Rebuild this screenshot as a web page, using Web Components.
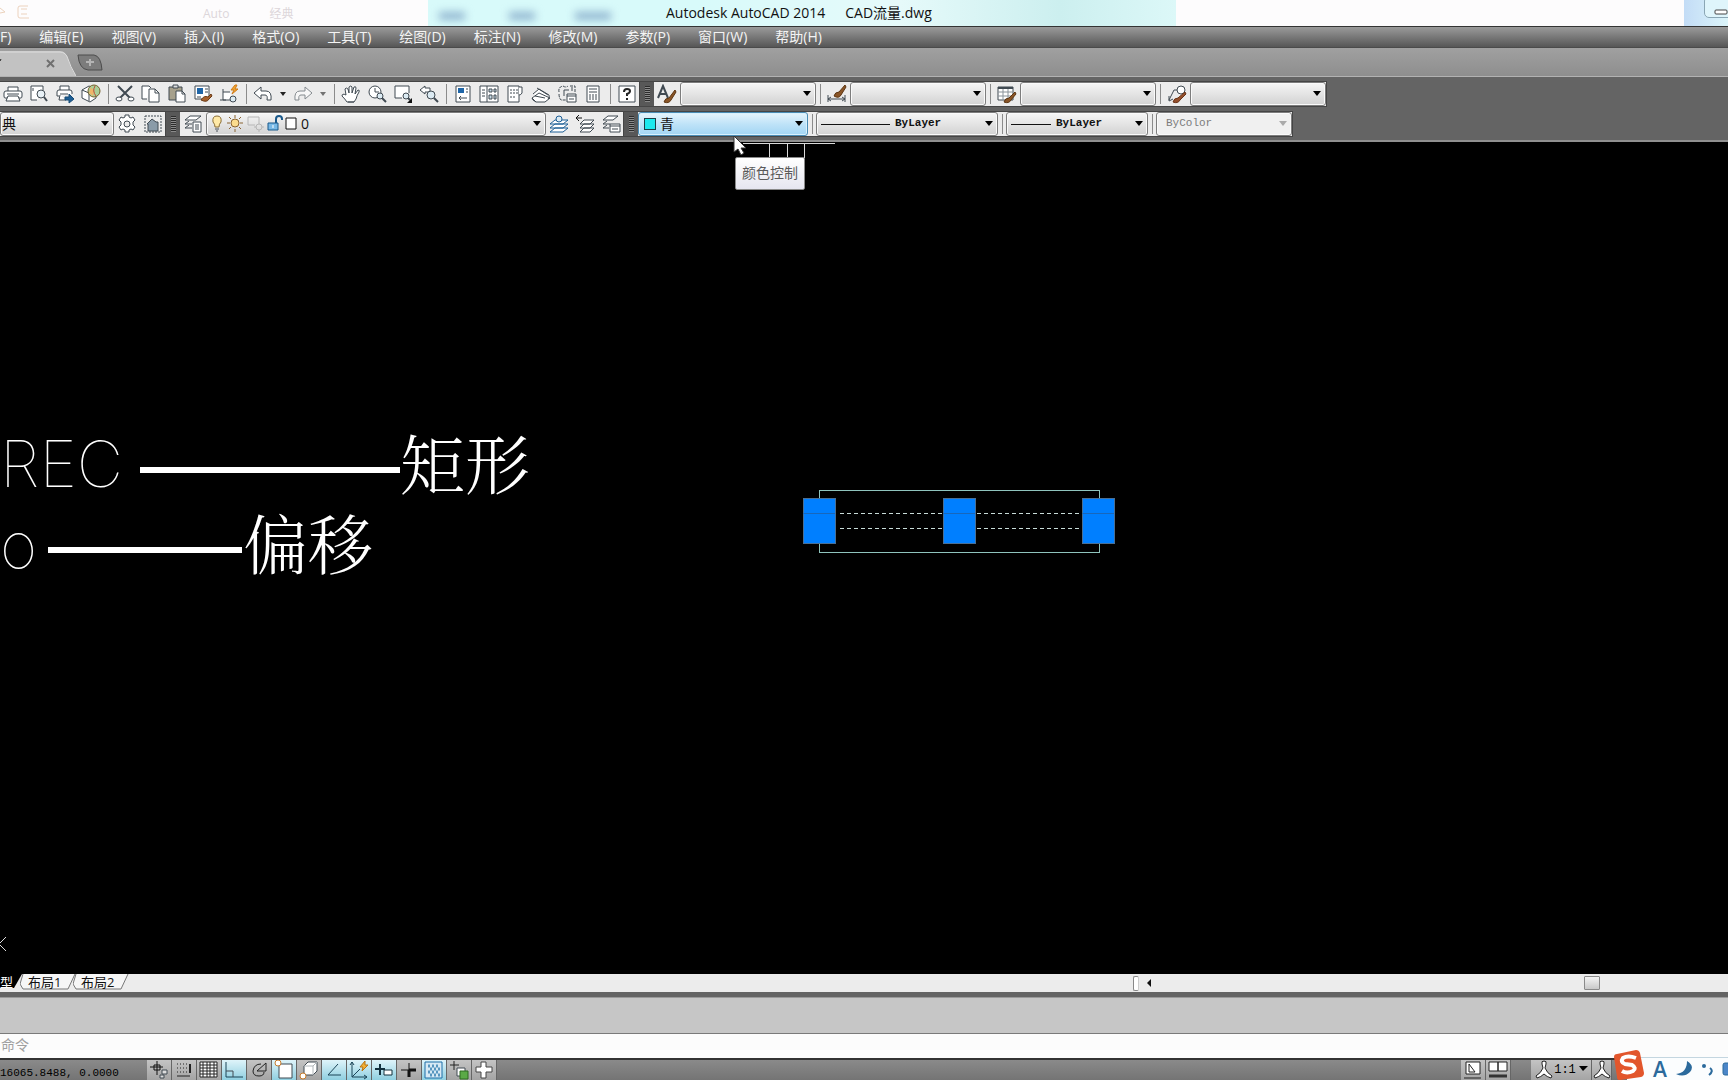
<!DOCTYPE html>
<html lang="zh-CN">
<head>
<meta charset="utf-8">
<title>Autodesk AutoCAD 2014 CAD流量.dwg</title>
<style>
  html, body { margin: 0; height: 100%; }
  body {
    overflow: hidden;
    background: #646464;
    font: 14px/20px "Open Sans", "Noto Sans CJK SC", sans-serif;
    color: #111;
  }
</style>
</head>
<body>
<cad-app>
  <title-bar slot="top" workspace="经典">
    <span slot="app">Autodesk AutoCAD 2014</span>
    <span slot="file">CAD流量.dwg</span>
  </title-bar>
  <menu-bar slot="top">
    <button>F)</button>
    <button>编辑(E)</button>
    <button>视图(V)</button>
    <button>插入(I)</button>
    <button>格式(O)</button>
    <button>工具(T)</button>
    <button>绘图(D)</button>
    <button>标注(N)</button>
    <button>修改(M)</button>
    <button>参数(P)</button>
    <button>窗口(W)</button>
    <button>帮助(H)</button>
  </menu-bar>
  <file-tabs slot="top"></file-tabs>

  <tool-row slot="top">
    <tool-bar>
      <tool-button icon="print" label="打印"></tool-button>
      <tool-button icon="preview" label="打印预览"></tool-button>
      <tool-button icon="publish" label="发布"></tool-button>
      <tool-button icon="print3d" label="三维打印"></tool-button>
      <tool-sep></tool-sep>
      <tool-button icon="cut" label="剪切"></tool-button>
      <tool-button icon="copy" label="复制"></tool-button>
      <tool-button icon="paste" label="粘贴"></tool-button>
      <tool-button icon="match" label="特性匹配"></tool-button>
      <tool-button icon="block" label="块编辑器"></tool-button>
      <tool-sep></tool-sep>
      <tool-button icon="undo" label="放弃"></tool-button>
      <tool-button icon="caret" label="放弃列表" narrow></tool-button>
      <tool-button icon="redo" label="重做" dim></tool-button>
      <tool-button icon="caret" label="重做列表" narrow dim></tool-button>
      <tool-sep></tool-sep>
      <tool-button icon="pan" label="实时平移"></tool-button>
      <tool-button icon="zoom" label="实时缩放"></tool-button>
      <tool-button icon="zoomwin" label="窗口缩放"></tool-button>
      <tool-button icon="zoomprev" label="缩放上一个"></tool-button>
      <tool-sep></tool-sep>
      <tool-button icon="props" label="特性"></tool-button>
      <tool-button icon="center" label="设计中心"></tool-button>
      <tool-button icon="palette" label="工具选项板"></tool-button>
      <tool-button icon="sheets" label="图纸集管理器"></tool-button>
      <tool-button icon="markup" label="标记集管理器"></tool-button>
      <tool-button icon="calc" label="快速计算器"></tool-button>
      <tool-sep></tool-sep>
      <tool-button icon="help" label="帮助"></tool-button>
    </tool-bar>
    <tool-bar grip>
      <tool-button icon="textstyle" label="文字样式"></tool-button>
      <combo-box class="style" label="文字样式控制"></combo-box>
      <tool-sep></tool-sep>
      <tool-button icon="dimstyle" label="标注样式"></tool-button>
      <combo-box class="style" label="标注样式控制"></combo-box>
      <tool-sep></tool-sep>
      <tool-button icon="tablestyle" label="表格样式"></tool-button>
      <combo-box class="style" label="表格样式控制"></combo-box>
      <tool-sep></tool-sep>
      <tool-button icon="leaderstyle" label="多重引线样式"></tool-button>
      <combo-box class="style" label="多重引线样式控制"></combo-box>
    </tool-bar>
  </tool-row>

  <tool-row slot="top">
    <tool-bar>
      <combo-box class="workspace" value="典" label="工作空间"></combo-box>
      <tool-button icon="gear" label="工作空间设置"></tool-button>
      <tool-button icon="home" label="我的工作空间"></tool-button>
    </tool-bar>
    <tool-bar grip>
      <tool-button icon="layerprops" label="图层特性管理器"></tool-button>
      <combo-box class="layer" value="0" label="图层控制"><layer-state></layer-state></combo-box>
      <tool-button icon="layercur" label="置为当前图层"></tool-button>
      <tool-button icon="layerprev" label="上一个图层"></tool-button>
      <tool-button icon="layerstate" label="图层状态管理器"></tool-button>
    </tool-bar>
    <tool-bar grip>
      <combo-box class="color" value="青" label="颜色控制" active><color-chip></color-chip></combo-box>
      <tool-sep></tool-sep>
      <combo-box class="linetype" value="ByLayer" label="线型控制" mono><line-sample class="long"></line-sample></combo-box>
      <tool-sep></tool-sep>
      <combo-box class="weight" value="ByLayer" label="线宽控制" mono><line-sample></line-sample></combo-box>
      <tool-sep></tool-sep>
      <combo-box class="plot" value="ByColor" label="打印样式控制" mono disabled></combo-box>
    </tool-bar>
  </tool-row>

  <drawing-area></drawing-area>
  <layout-tabs slot="bottom"></layout-tabs>
  <command-line slot="bottom" prompt="命令"></command-line>
  <status-bar slot="bottom" coords="16065.8488, 0.0000"></status-bar>
  <tool-tip slot="over">颜色控制</tool-tip>
  <ime-bar slot="over"></ime-bar>
</cad-app>

<script>
// Icons share a 20x20 grid. Default stroke comes from the svg element.
const ICONS = {
  print: `<path fill="#fff" d="M5 7V3h10v4M4 14H2Q1 14 1 12V9q0-2 2-2h14q2 0 2 2v3q0 2-1 2h-2"/><path fill="#fff" d="M5 12h10l2 5H3z"/><path d="M4 10h12"/>`,
  preview: `<path fill="#fff" d="M14 6V2H2v14h6"/><path d="M4 4v3"/><circle cx="12" cy="10" r="4" fill="#e8f1f6"/><path stroke-width="2" d="M15 13l3 4"/>`,
  publish: `<path fill="#fff" d="M5 6V2h9v4M4 12H2V8q0-2 2-2h11q2 0 2 2v2M5 10h8M5 11l-1 5h7"/><path fill="#1d5e95" stroke="#174a75" d="M10 13h4v-3l5 5-5 4v-3h-4z"/>`,
  print3d: `<path fill="#fff" d="M1 6l7-4 7 3v9l-6 4-8-4z"/><path d="M1 6l7 3v8"/><circle cx="13" cy="7" r="6" fill="#a9d09a" stroke="#77602c"/><path fill="#f0b569" stroke="none" d="M10 3q4 4 2 9l-4-3z"/><path stroke="#c54a31" d="M14 2q-3 5 1 10"/>`,
  cut: `<path stroke-width="2" d="M3 2l12 12M17 2L5 14"/><ellipse cx="4" cy="15" rx="3" ry="2" fill="#fff"/><ellipse cx="16" cy="15" rx="3" ry="2" fill="#fff"/>`,
  copy: `<path fill="#fff" d="M6 15H1V2h7l2 2"/><path fill="#fff" d="M8 5h6l4 4v9H8z"/><path d="M14 5v4h4"/>`,
  paste: `<path fill="#a7a18c" d="M2 3h13v13H2z"/><path fill="#ddd" d="M6 1h5v3H6z"/><path fill="#fff" d="M9 7h6l3 3v8H9z"/><path d="M15 7v3h3"/>`,
  match: `<path fill="#fff" d="M2 2h14v13H2z"/><path fill="#1f66a8" stroke="none" d="M4 4h6v6H4z"/><path d="M12 5h3M12 8h3M4 13h4"/><path fill="#a4602d" stroke="#6b3b16" d="M8 16q3-5 7-3l3-3 1 2-3 3q-2 4-8 1z"/>`,
  block: `<path fill="#fff" d="M11 8H4v8h9"/><path d="M1 16h6M4 5v3"/><circle cx="14" cy="15" r="3" fill="#dcebf3"/><path fill="#f2a530" stroke="#cd7a18" d="M16 1l-4 5h3l-2 4 6-5h-3l2-4z"/>`,
  undo: `<path fill="#fff" d="M1 9l7-6v4h5q6 0 5 9h-4q1-5-2-5H8v4z"/>`,
  redo: `<path fill="#fff" d="M19 9l-7-6v4H7q-6 0-5 9h4q-1-5 2-5h4v4z"/>`,
  caret: `<path fill="currentColor" stroke="none" d="M7 8h6l-3 4z"/>`,
  pan: `<path fill="#fff" d="M6 18q-2-3-5-6 0-3 4-1L4 5q1-2 3 0l1 4V3q2-2 3 0v6l2-6q2-1 2 1l-1 6 3-4q2 0 1 2-2 3-3 7l-2 3z"/><path d="M7 18h6"/>`,
  zoom: `<circle cx="8" cy="8" r="6" fill="#fff"/><path d="M8 4v4h4"/><circle cx="13" cy="12" r="3" fill="#dcebf3"/><path stroke-width="2" d="M15 14l4 4"/>`,
  zoomwin: `<path fill="#fff" d="M9 14H2V2h14v7"/><circle cx="13" cy="12" r="3" fill="#dcebf3"/><path stroke-width="2" d="M15 14l2 2"/><path fill="#111" stroke="none" d="M19 14v5h-5z"/>`,
  zoomprev: `<path fill="#fff" d="M1 6l5-4v2h5v4H6v2z"/><circle cx="12" cy="11" r="4" fill="#dcebf3"/><path stroke-width="2" d="M15 14l4 4"/>`,
  props: `<path fill="#fff" d="M3 2h14v16H3z"/><path fill="#1f66a8" stroke="none" d="M5 4h6v5H5z"/><path d="M13 5h2M13 8h2M6 14h8M8 12l-2 2 2 2"/>`,
  center: `<path fill="#fff" d="M1 2h18v16H1z"/><path d="M8 2v16M3 6h3M3 9h3M3 12h3"/><path fill="#c6dae6" d="M10 5h3v3h-3zM15 5h2v3h-2zM10 11h3v4h-3zM15 11h2v4h-2z"/>`,
  palette: `<path fill="#fff" d="M3 2h11v16H3z"/><path fill="#fff" d="M14 3h3v6q-1 2-3 2"/><path d="M5 6h2M8 6h2M11 6h2M5 9h2M8 9h2M11 9h2M5 13h2M8 13h2"/>`,
  sheets: `<path fill="#fff" d="M1 14l7-5 11 5-5 4H5zM2 10l6-5 10 6q1 3-1 4"/><path d="M6 4l11 7M4 12l10 2M1 14q0 2 4 4"/>`,
  markup: `<path stroke-dasharray="3 1" d="M2 8q-1-5 4-6 3 2 5 0M2 10q0 4 2 6h5M13 2h5v6"/><path d="M7 6v6M7 6h5M15 3v4"/><path fill="#fff" d="M10 10h9v8h-9z"/><path d="M10 12h9M12 15h5"/>`,
  calc: `<path fill="#fff" d="M4 2h12v16H4z"/><path d="M6 5h8M6 8h8"/><path stroke-dasharray="2 1" d="M6 11h8M6 13h8M6 15h8"/>`,
  help: `<path fill="#fff" d="M2 2h16v16H2z"/><path stroke="#222" stroke-width="2" d="M7 8q0-3 3-3t3 2q0 2-3 3v2M10 14v2"/>`,
  textstyle: `<path stroke-width="2" d="M1 14L6 2l5 12M3 10h6"/><path fill="#8a5527" stroke="#5c3613" d="M7 18q1-4 5-4l6-8 1 2-5 8q-2 4-7 2z"/>`,
  dimstyle: `<path d="M1 11v7M18 11v7M1 15h17M4 13l-3 2 3 2M15 13l3 2-3 2"/><path fill="#8a5527" stroke="#5c3613" d="M7 12q1-4 5-4l6-7 1 2-5 8q-2 4-7 1z"/>`,
  tablestyle: `<path fill="#fff" d="M1 3h15v13H1z"/><path stroke-width="2" d="M1 4h15"/><path stroke="#8a939a" d="M1 8h15M1 12h15M6 5v11M11 5v11"/><path fill="#8a5527" stroke="#5c3613" d="M7 18q1-4 5-4l6-6 1 2-5 6q-2 4-7 2z"/>`,
  leaderstyle: `<path d="M2 16L7 6h4M2 12v5l4-2"/><circle cx="14" cy="6" r="4" fill="#fff"/><path fill="#95502b" stroke="#6a3217" d="M6 18q1-4 5-4l7-6 1 2-6 6q-2 4-7 2z"/>`,
  gear: `<path fill="#fff" d="M8 1h4v2l2 1 2-1 2 3-2 2v3l2 2-2 3-2-1-2 1v2H8v-2l-2-1-2 1-2-3 2-2V8L2 6l2-3 2 1 2-1z"/><circle cx="10" cy="10" r="3" fill="#ececec"/>`,
  home: `<path stroke-dasharray="2 1" d="M2 2h16v16H2z"/><path fill="#8a9ba8" d="M4 10l5-5 4 3h2v9H5v-7z"/>`,
  layerprops: `<path fill="#fff" d="M2 6l5-4h11l-5 4zM2 10l4-3M2 10h7M2 14l4-3M2 14h7"/><path fill="#fff" d="M10 8h8v10h-8z"/><path d="M12 11h4M12 13h4M12 15h4"/>`,
  layercur: `<g stroke="#1d5e95"><path fill="#fff" d="M1 18l5-4h13l-5 4zM1 14l5-4h13l-5 4zM1 10l5-4h13l-5 4z"/></g><circle cx="10" cy="5" r="3" fill="#dcebf3" stroke="#1d5e95"/>`,
  layerprev: `<path fill="#fff" d="M5 18l4-4h10l-4 4zM5 14l4-4h10l-4 4zM5 10l4-4h10l-4 4z"/><path stroke="#111" d="M1 4h6M4 1L1 4l3 3"/>`,
  layerstate: `<path fill="#fff" d="M2 6l5-4h10l-5 4zM2 10l4-3M2 10h7M2 14l4-3M2 14h6"/><path fill="#fff" d="M9 10h10v8H9z"/><path d="M9 12h10M11 15h6"/>`,
  infer: `<path stroke="#111" d="M8 1v14M1 7h13M5 5h6v5H5z"/><path fill="#ddd" d="M13 10h5v4h-5zM11 15h4v3h-4z"/>`,
  snap: `<path stroke="#222" stroke-dasharray="1 2" d="M3 4h11M3 8h11M3 12h11"/><path stroke="#222" d="M3 16h13"/><path stroke="#222" stroke-width="2" d="M16 4v9"/>`,
  grid: `<path fill="#fff" stroke="#222" d="M1 2h17v15H1zM4 2v15M8 2v15M11 2v15M15 2v15M1 5h17M1 8h17M1 11h17M1 14h17"/>`,
  ortho: `<path stroke="#1b4457" d="M2 2v15h17"/><path d="M2 11h7v6"/>`,
  polar: `<path stroke="#222" d="M17 3v8H8zM12 4Q5 4 4 11q0 5 6 5 5 0 5-4"/>`,
  osnap: `<path fill="#fff" d="M5 4h13v14H5z"/><circle cx="4" cy="3" r="3" fill="#fff" stroke="#c77b2c"/>`,
  osnap3d: `<path fill="#fff" d="M5 6l4-4h9v9l-4 4H5z"/><path stroke="#b0b6ba" d="M5 6h9v9M14 6l4-4"/><circle cx="4" cy="16" r="3" fill="#fff" stroke="#c77b2c"/>`,
  otrack: `<path stroke="#1b4457" d="M14 4L4 15h13"/>`,
  ducs: `<path stroke="#1b4457" d="M3 2v15h15M1 5l2-3 2 3M15 15l3 2-3 2M3 17l8-8"/><path fill="#f2b035" stroke="#b87415" d="M16 1l-5 6h3l-1 4 6-6h-3z"/>`,
  dyn: `<path stroke="#12303d" stroke-width="2" d="M1 9h10M6 4v11"/><path fill="#fff" stroke="#12303d" d="M10 10h8v5h-8z"/>`,
  lwt: `<path stroke="#111" d="M2 10h8V3"/><path stroke="#111" stroke-width="3" d="M10 10h7M10 10v7"/>`,
  transp: `<path fill="#d6e9f4" stroke="#1d6ea8" d="M1 2h17v16H1z"/><path stroke="#5796bf" stroke-width="3" stroke-dasharray="2 2" d="M4 6h12M6 9h10M4 12h12M6 15h10"/>`,
  quick: `<path stroke="#222" d="M5 1v9M1 5h9"/><path fill="#fff" d="M8 8h8v8H8z"/><path fill="#5aa946" stroke="#2c6b20" d="M11 11h8v8h-8z"/>`,
  plus: `<path fill="#fff" stroke="#444" d="M7 2h5v5h6v5h-6v6H7v-6H2V7h5z"/>`,
  model: `<path fill="#fff" stroke="#222" d="M3 2h14v12H3z"/><path stroke="#222" d="M6 4v8h6zM1 18h17"/>`,
  tiles: `<path fill="#fff" stroke="#222" d="M1 2h9v9H1zM10 2h9v9h-9z"/><path stroke="#333" stroke-width="3" d="M1 16h18"/>`,
  scale: `<path fill="#fff" stroke="#222" d="M10 1q3 0 2 3l-1 4q2 5 7 8l-1 2q-4-1-7-4-3 3-7 4l-1-2q5-3 7-8L8 4q-1-3 2-3z"/>`
};

function drawIcon(name) {
  return `<svg width="20" height="20" viewBox="0 0 20 20" aria-hidden="true"
    fill="none" stroke="#404a52" stroke-width="1">${ICONS[name]}</svg>`;
}

class CadElement extends HTMLElement {
  constructor() {
    super();
    this.attachShadow({ mode: 'open' });
  }

  connectedCallback() {
    this.shadowRoot.innerHTML = this.template();
  }
}

class CadApp extends CadElement {
  template() {
    return `
      <style>
        :host { display: flex; flex-direction: column; height: 100vh; position: relative; overflow: hidden; }
        header, footer { flex: none; }
        header { box-shadow: inset 0 -2px #909090; }
        main { flex: 1; min-height: 0; display: flex; }
      </style>
      <header><slot name="top"></slot></header>
      <main><slot></slot></main>
      <footer><slot name="bottom"></slot></footer>
      <slot name="over"></slot>
    `;
  }
}

class TitleBar extends CadElement {
  template() {
    return `
      <style>
        :host {
          display: block; height: 27px; box-sizing: border-box; position: relative;
          background: linear-gradient(90deg, #fdfcfd 0 428px, #d8fafa 428px 700px, #e6fafa 900px, #ccefef 1060px, #dcf8f8 1176px, #fdfcfd 1176px);
          border-bottom: 1px solid #333;
        }
        h1 {
          margin: 0; font-size: 14px; line-height: 25px; font-weight: 400;
          display: flex; gap: 20px; padding-left: 666px; white-space: nowrap;
        }
        .ghost { position: absolute; top: 4px; left: 203px; color: #dcd6da; font-size: 12px; display: flex; gap: 40px; }
        .blob { position: absolute; top: 12px; height: 8px; width: 26px; background: #8fb4cf; filter: blur(4px); }
        .b1 { left: 439px; } .b2 { left: 509px; } .b3 { left: 575px; width: 36px; }
        .doc { position: absolute; left: 0; top: 3px; }
        .glass { position: absolute; right: 0; top: 0; width: 44px; height: 26px; background: linear-gradient(90deg, #c3dcf6, #dcf5fa); }
        button {
          position: absolute; right: -12px; top: -4px; width: 36px; height: 22px; padding: 0;
          border: 1px solid #8aa6b4; border-radius: 5px; background: #dff5fb;
        }
        button svg { position: absolute; left: 9px; top: 12px; }
      </style>
      <h1><slot name="app"></slot><slot name="file"></slot></h1>
      <div class="ghost"><span>Auto</span><span>${this.getAttribute('workspace')}</span></div>
      <i class="blob b1"></i><i class="blob b2"></i><i class="blob b3"></i>
      <svg class="doc" width="34" height="18" fill="none" stroke="#ecd2bd"><path d="M0 5l5 4-5 1M28 3h-8q-2 0-2 2v8q0 2 2 2h9M21 6h6M21 11h6"/></svg>
      <div class="glass"></div>
      <button aria-label="最小化"><svg width="15" height="6"><rect x="1" y="1" width="12" height="4" rx="1" fill="#fff" stroke="#444"/></svg></button>
    `;
  }
}

class MenuBar extends CadElement {
  template() {
    return `
      <style>
        :host { display: block; background: linear-gradient(#9a9a9a, #565656); height: 21px; border-bottom: 1px solid #4a4a4a; box-sizing: border-box; }
        nav { display: flex; gap: 28px; }
        ::slotted(button) {
          border: 0; padding: 0; background: none; color: #f4f4f4;
          font: inherit; font-size: 14px; line-height: 20px; white-space: nowrap;
        }
      </style>
      <nav><slot></slot></nav>
    `;
  }
}

class FileTabs extends CadElement {
  template() {
    return `
      <style>
        :host { display: flex; height: 28px; align-items: flex-end; margin-bottom: 5px; background: linear-gradient(#a0a0a0, #8e8e8e); border-bottom: 1px solid #b2b2b2; }
        .tab { position: relative; width: 76px; height: 25px; }
        .tab svg { display: block; }
        button { border: 0; padding: 0; background: none; }
        .close { position: absolute; left: 45px; top: 7px; width: 12px; height: 12px; }
        .new { height: 25px; }
      </style>
      <div class="tab">
        <svg width="76" height="25"><path d="M0 0H60Q66 0 68 8T76 25H0z" fill="#c2c2c2"/><path d="M0 1H60Q66 1 68 8T76 25" fill="none" stroke="#dedede"/><path d="M1 8l-1 2" stroke="#222"/></svg>
        <button class="close" aria-label="关闭"><svg width="12" height="12" stroke="#707070" stroke-width="2"><path d="M2 2l7 7M9 2l-7 7"/></svg></button>
      </div>
      <button class="new" aria-label="新建"><svg width="28" height="25"><path d="M2 4h16q7 1 8 15H12Q3 18 2 4z" fill="#7c7c7c" stroke="#4c4c4c"/><path d="M14 8v7M10 11h8" stroke="#b4b4b4" stroke-width="2"/></svg></button>
    `;
  }
}

class ToolRow extends CadElement {
  template() {
    return `
      <style>
        :host { display: flex; height: 24px; margin-bottom: 6px; }
      </style>
      <slot></slot>
    `;
  }
}

class ToolBar extends CadElement {
  template() {
    const grip = this.hasAttribute('grip') ? '<i></i>' : '';
    return `
      <style>
        :host { display: flex; flex: none; height: 24px; background: #ececec; box-shadow: 0 0 0 1px #454545; }
        i { width: 14px; background: #585858; display: flex; align-items: center; justify-content: center; }
        i::before { content: ""; width: 5px; height: 16px; background: repeating-linear-gradient(#2c2c2c 0 1px, #8a8a8a 1px 2px); }
        ::slotted(combo-box.style) { width: 136px; }
        ::slotted(combo-box.workspace) { width: 114px; }
        ::slotted(combo-box.layer) { width: 340px; }
        ::slotted(combo-box.color) { width: 170px; }
        ::slotted(combo-box.linetype) { width: 182px; }
        ::slotted(combo-box.weight) { width: 142px; }
        ::slotted(combo-box.plot) { width: 136px; }
      </style>
      ${grip}<slot></slot>
    `;
  }
}

class ToolSep extends CadElement {
  template() {
    return `
      <style>
        :host { display: flex; width: 8px; justify-content: center; align-items: center; }
        i { width: 1px; height: 20px; background: #8b8b8b; }
      </style>
      <i></i>
    `;
  }
}

class ToolButton extends CadElement {
  template() {
    const dim = this.hasAttribute('dim');
    return `
      <style>
        :host { display: block; width: ${this.hasAttribute('narrow') ? 14 : 26}px; flex: none; overflow: hidden; }
        button {
          width: 100%; height: 24px; padding: 0; border: 0; background: none; color: #222;
          display: flex; align-items: center; justify-content: center;
          opacity: ${dim ? 0.6 : 1};
        }
        svg { flex: none; }
      </style>
      <button aria-label="${this.getAttribute('label')}">${drawIcon(this.getAttribute('icon'))}</button>
    `;
  }
}

class ComboBox extends CadElement {
  template() {
    const value = this.getAttribute('value') || '';
    const active = this.hasAttribute('active');
    const disabled = this.hasAttribute('disabled');
    const mono = this.hasAttribute('mono');
    let fill = 'linear-gradient(#f6f6f6, #d2d2d2)';
    if (active) fill = 'linear-gradient(#e6f5fd, #bfe3f8 50%, #a2d5f3)';
    if (disabled) fill = '#f0f0f0';
    return `
      <style>
        :host {
          display: flex; align-items: center; box-sizing: border-box; height: 24px;
          border: 1px solid ${active ? '#4a8cb5' : '#7d7d7d'}; border-radius: 3px;
          background: ${fill}; box-shadow: inset 0 0 0 1px ${active ? '#d8f1fd' : '#fafafa'};
          position: relative;
        }
        select {
          appearance: none; flex: 1; min-width: 0; height: 22px; border: 0; padding: 0 18px 2px 4px;
          background: none; color: ${disabled ? '#7c7c7c' : '#111'}; opacity: 1;
          font-family: ${mono ? '"Liberation Mono", monospace' : '"Open Sans", "Noto Sans CJK SC", sans-serif'};
          font-size: ${mono ? 11 : 14}px;
          font-weight: ${mono && !disabled ? 700 : 400};
        }
        :host(.workspace) select { padding-left: 1px; }
        :host(.plot) select { padding-left: 9px; }
        svg { position: absolute; right: 3px; top: 8px; pointer-events: none; }
      </style>
      <slot></slot>
      <select aria-label="${this.getAttribute('label')}" ${disabled ? 'disabled' : ''}><option>${value}</option></select>
      <svg width="10" height="6"><path d="M1 0h8L5 5z" fill="${disabled ? '#aaa' : '#000'}"/></svg>
    `;
  }
}

class LayerState extends CadElement {
  template() {
    return `
      <style>:host { display: block; height: 20px; padding-left: 2px; }</style>
      <svg width="88" height="20" fill="none" stroke="#4a525a">
        <path d="M6 13q0-3-2-5-1-6 4-6t4 6q-2 2-2 5z" fill="#ffe9a6" stroke="#8a6d35"/><path d="M6 15h4M7 17h2"/>
        <circle cx="26" cy="9" r="4" fill="#fbdc8d" stroke="#8a6432"/>
        <path stroke="#8a6432" d="M26 1v3M26 15v3M18 9h3M31 9h3M20 3l2 2M30 13l2 2M32 3l-2 2M22 13l-2 2"/>
        <g stroke="#b6b6b6"><path d="M46 11h-7V3h11v5"/><circle cx="50" cy="13" r="3"/><path d="M50 8v2M50 16v2M45 13h2M53 13h2"/></g>
        <path d="M59 9h10v7H59z" fill="#79b9e6" stroke="#19588a"/><path d="M67 9V5q0-3 3-3t3 3v1" stroke="#19588a" stroke-width="2"/><path d="M64 11v3" stroke="#fff"/>
        <path d="M77 4h10v11H77z" fill="#fff" stroke="#111"/>
      </svg>
    `;
  }
}

class ColorChip extends CadElement {
  template() {
    return `
      <style>:host { display: block; width: 10px; height: 10px; margin-left: 5px; border: 1px solid #1b4048; background: #1ee9ee; }</style>
    `;
  }
}

class LineSample extends CadElement {
  template() {
    return `
      <style>
        :host { display: block; width: 40px; height: 1px; margin: 0 1px 0 4px; background: #111; }
        :host(.long) { width: 69px; }
      </style>
    `;
  }
}

class DrawingArea extends CadElement {
  template() {
    const grip = (x) => `<rect x="${x}" y="356" width="32" height="45" fill="#007fff" stroke="#4a6f94"/><path d="M${x} 371h32" stroke="#1867bb"/>`;
    return `
      <style>
        :host { display: block; flex: 1; position: relative; background: #000; overflow: hidden; color: #fff; }
        svg { position: absolute; width: 100%; height: 100%; }
        span { position: absolute; white-space: nowrap; line-height: 80px; }
        .stroke { font-family: Inter, sans-serif; font-weight: 100; font-size: 64px; left: 0; }
        .song { font-family: "Noto Serif CJK SC", "Noto Sans CJK SC", serif; font-weight: 300; font-size: 65px; }
        .rec { top: 282px; }
        .o { top: 363px; }
        .rect { left: 400px; top: 279px; }
        .offset { left: 243px; top: 359px; }
      </style>
      <svg fill="none" shape-rendering="crispEdges">
        <path d="M743 1H835M769 1V16M787 1V16M804 1V16" stroke="#d8d8d8"/>
        <path d="M140 328H400M48 408H242" stroke="#fff" stroke-width="6"/>
        <path d="M819 348H1099V410H819z" stroke="#8fc4bd"/>
        <path d="M840 371H943M977 371H1082M840 386H943M977 386H1082" stroke="#c8dcd8" stroke-dasharray="4 3"/>
        ${grip(803)}${grip(943)}${grip(1082)}
        <path d="M-8 795L6 809M6 795L-8 809" stroke="#ddd" shape-rendering="auto"/>
      </svg>
      <span class="stroke rec">REC</span>
      <span class="song rect">矩形</span>
      <span class="stroke o">o</span>
      <span class="song offset">偏移</span>
    `;
  }
}

class LayoutTabs extends CadElement {
  template() {
    return `
      <style>
        :host { display: flex; height: 18px; background: #ececec; border-bottom: 5px solid #646464; font-size: 13px; line-height: 17px; }
        nav { display: flex; flex: 1133; min-width: 0; }
        button { position: relative; border: 0; padding: 0; background: none; font: inherit; color: #111; height: 17px; white-space: nowrap; }
        button span { position: relative; }
        button svg { position: absolute; left: 0; top: 0; }
        .model { width: 20px; color: #fff; text-align: left; }
        .layout { width: 53px; text-align: left; padding-left: 8px; }
        .scroll { flex: 595; display: flex; align-items: center; position: relative; }
        .split { width: 4px; height: 13px; border: 1px solid #888; border-right-color: #ccc; background: #fff; border-radius: 2px; }
        .track { flex: 1; display: flex; align-items: center; padding: 0 128px 0 7px; justify-content: space-between; }
        .track button { display: flex; align-items: center; }
        .track svg { position: static; }
        .thumb { width: 14px; height: 12px; border: 1px solid #8a8a8a; border-radius: 1px; background: linear-gradient(#f4f4f4, #c9c9c9); }
      </style>
      <nav>
        <button class="model"><svg width="22" height="17"><path d="M0 0H22L14 14H0z" fill="#000"/></svg><span>型</span></button>
        <button class="layout"><svg width="56" height="17" fill="#f6f6f6" stroke="#777"><path d="M3 0L0 10l3 5H48L55 0"/></svg><span>布局1</span></button>
        <button class="layout"><svg width="56" height="17" fill="#f6f6f6" stroke="#777"><path d="M3 0L0 10l3 5H48L55 0"/></svg><span>布局2</span></button>
      </nav>
      <div class="scroll">
        <div class="split"></div>
        <div class="track">
          <button aria-label="向左滚动"><svg width="6" height="8"><path d="M5 0v8L1 4z" fill="#111"/></svg></button>
          <div class="thumb"></div>
        </div>
      </div>
    `;
  }
}

class CommandLine extends CadElement {
  template() {
    return `
      <style>
        :host { display: block; }
        output { display: block; height: 35px; background: #c6c6c6; border-top: 1px solid #9a9a9a; border-bottom: 1px solid #7a7a7a; }
        input {
          display: block; width: 100%; height: 24px; box-sizing: border-box; border: 0; margin: 0; padding: 0 0 4px 1px;
          background: #fcfcfc; font: inherit; font-size: 14px; color: #111;
        }
        input::placeholder { color: #a0a0a0; opacity: 1; }
      </style>
      <output></output>
      <input placeholder="${this.getAttribute('prompt')}" aria-label="${this.getAttribute('prompt')}">
    `;
  }
}

class StatusBar extends CadElement {
  template() {
    const toggles = ['infer', 'snap', 'grid', 'ortho', 'polar', 'osnap', 'osnap3d', 'otrack', 'ducs', 'dyn', 'lwt', 'transp', 'quick', 'plus'];
    const on = ['ortho', 'osnap', 'otrack', 'ducs', 'dyn', 'transp'];
    const buttons = toggles.map(name =>
      `<button aria-label="${name}" aria-pressed="${on.includes(name)}">${drawIcon(name)}</button>`).join('');
    return `
      <style>
        :host { display: flex; height: 20px; overflow: hidden; border-top: 2px solid #333; background: linear-gradient(#8a8a8a, #747474); }
        .coords { flex: none; width: 147px; font: 11px/26px "Liberation Mono", monospace; color: #000; white-space: nowrap; }
        div { display: flex; flex: none; }
        .views { margin-left: auto; }
        .views + .scale { margin-left: 20px; }
        .scale { margin-right: 116px; }
        button {
          width: 25px; height: 20px; padding: 0; border: 0; border-right: 1px solid #666; color: #000;
          background: linear-gradient(#c4c4c4, #a4a4a4); display: flex; align-items: flex-start; justify-content: center;
          font: 12px/20px "Liberation Mono", monospace;
        }
        button[aria-pressed="true"] { background: linear-gradient(#dff4fa, #8fcfe0); }
        .ratio { width: 61px; }
        .vis { width: 20px; }
        svg { flex: none; }
        .ratio svg + span + svg { margin: 6px 0 0 3px; }
      </style>
      <span class="coords">${this.getAttribute('coords')}</span>
      <div>${buttons}</div>
      <div class="views">
        <button aria-label="模型">${drawIcon('model')}</button>
        <button aria-label="快速查看布局">${drawIcon('tiles')}</button>
      </div>
      <div class="scale">
        <button class="ratio">${drawIcon('scale')}<span>1:1</span><svg width="9" height="6"><path d="M0 0h9L4 5z"/></svg></button>
        <button class="vis" aria-label="注释可见性">${drawIcon('scale')}</button>
      </div>
    `;
  }
}

class ToolTip extends CadElement {
  template() {
    return `
      <style>
        :host {
          position: absolute; left: 735px; top: 157px; padding: 5px 6px 6px; color: #5a5a5a;
          font-size: 14px; line-height: 20px; border: 1px solid #8a8a8a; border-radius: 2px;
          background: linear-gradient(#fff, #e6e6f0);
        }
        svg { position: absolute; left: -3px; top: -23px; }
      </style>
      <slot></slot>
      <svg width="15" height="21"><path d="M1 1V17l4-3 3 6 3-2-3-5h5z" fill="#fff" stroke="#333"/></svg>
    `;
  }
}

class ImeBar extends CadElement {
  template() {
    return `
      <style>
        :host {
          position: absolute; right: 0; bottom: 0; width: 101px; height: 22px; background: #fbfdfe; border-top: 1px solid #c4d6e0;
          display: flex; align-items: center; gap: 9px; color: #2b6a9c;
        }
        .logo { margin: -8px 0 0 -15px; flex: none; }
        button { border: 0; padding: 0; background: none; color: inherit; font: 600 21px/22px "Open Sans", sans-serif; flex: none; }
        button svg { display: block; }
      </style>
      <svg class="logo" width="32" height="30"><path d="M2 7q0-3 3-3L24 0q3 0 4 3l4 20q0 3-3 4L8 30H7q-2 0-2-3z" fill="#e2562c"/><path d="M24 8q-8-3-13 0-3 4 2 6l7 1q5 3 1 6-6 3-11 0" fill="none" stroke="#fff" stroke-width="4"/></svg>
      <button>A</button>
      <button aria-label="半角"><svg width="16" height="16"><path d="M11 0q8 5 3 11-6 6-14 2 11-1 11-13z" fill="#2b6a9c"/></svg></button>
      <button aria-label="中文标点"><svg width="12" height="14"><circle cx="3" cy="4" r="2" fill="#2b6a9c"/><path d="M9 6q4 3-1 7" fill="none" stroke="#2b6a9c" stroke-width="2"/></svg></button>
      <button aria-label="软键盘"><svg width="16" height="14"><rect x="1" y="1" width="16" height="12" rx="2" fill="#4b86c8" stroke="#2b6a9c"/></svg></button>
    `;
  }
}

customElements.define('cad-app', CadApp);
customElements.define('title-bar', TitleBar);
customElements.define('menu-bar', MenuBar);
customElements.define('file-tabs', FileTabs);
customElements.define('tool-row', ToolRow);
customElements.define('tool-bar', ToolBar);
customElements.define('tool-sep', ToolSep);
customElements.define('tool-button', ToolButton);
customElements.define('combo-box', ComboBox);
customElements.define('layer-state', LayerState);
customElements.define('color-chip', ColorChip);
customElements.define('line-sample', LineSample);
customElements.define('drawing-area', DrawingArea);
customElements.define('layout-tabs', LayoutTabs);
customElements.define('command-line', CommandLine);
customElements.define('status-bar', StatusBar);
customElements.define('tool-tip', ToolTip);
customElements.define('ime-bar', ImeBar);
</script>
</body>
</html>
